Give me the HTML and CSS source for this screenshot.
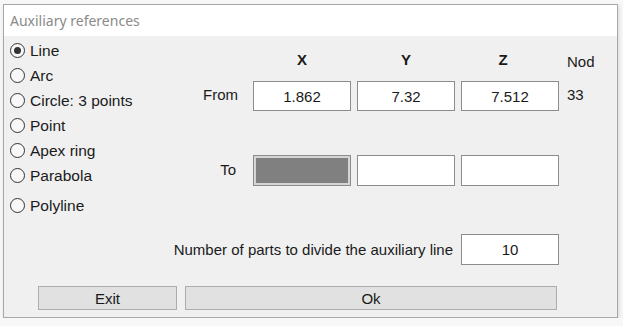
FILE: index.html
```html
<!DOCTYPE html>
<html lang="en">
<head>
    <meta charset="UTF-8">
    <title>Auxiliary references</title>
    <link rel="stylesheet" href="styles.css">
</head>
<body>

    <div class="dialog">
        <div class="dialog-title">Auxiliary references</div>

        <div class="dialog-body">
            <div class="ref-types">
                <label class="radio checked"><span class="radio-dot"></span>Line</label>
                <label class="radio"><span class="radio-dot"></span>Arc</label>
                <label class="radio"><span class="radio-dot"></span>Circle: 3 points</label>
                <label class="radio"><span class="radio-dot"></span>Point</label>
                <label class="radio"><span class="radio-dot"></span>Apex ring</label>
                <label class="radio"><span class="radio-dot"></span>Parabola</label>
                <label class="radio polyline"><span class="radio-dot"></span>Polyline</label>
            </div>

            <div class="coords">
                <div></div>
                <div class="col-head">X</div>
                <div class="col-head">Y</div>
                <div class="col-head col-z">Z</div>
                <div class="nod-head">Nod</div>

                <div class="row-label">From</div>
                <div class="field">1.862</div>
                <div class="field">7.32</div>
                <div class="field">7.512</div>
                <div class="nod-value">33</div>

                <div class="spacer"></div>

                <div class="row-label to-label">To</div>
                <div class="field field-active"></div>
                <div class="field"></div>
                <div class="field"></div>
                <div></div>

                <div class="spacer"></div>

                <div class="parts-label">Number of parts to divide the auxiliary line</div>
                <div class="field">10</div>
                <div></div>
            </div>
        </div>

        <div class="dialog-buttons">
            <button class="btn btn-exit">Exit</button>
            <button class="btn btn-ok">Ok</button>
        </div>
    </div>

</body>
</html>
```

FILE: styles.css
```css
body {
    margin: 0;
    padding: 0;
    background-color: #f7f7f7;
    font-family: "Liberation Sans", Arial, sans-serif;
    font-size: 15px;
    color: #1a1a1a;
}

.dialog {
    width: 613px;
    height: 312px;
    margin: 4px 0 0 3px;
    background-color: #f0f0f0;
    border: 1px solid #a8a8a8;
    box-shadow: 1px 2px 4px rgba(0, 0, 0, 0.12);
}

.dialog-title {
    height: 31px;
    line-height: 31px;
    padding-left: 6px;
    background-color: #fff;
    color: #8a8a8a;
    font-family: "Noto Sans", sans-serif;
    font-size: 14px;
}

.dialog-body {
    display: flex;
}

.ref-types {
    width: 166px;
    padding-top: 2px;
    display: flex;
    flex-direction: column;
}

.radio {
    height: 25px;
    display: flex;
    align-items: center;
    padding-left: 6px;
    font-size: 15.5px;
}

.radio.polyline {
    margin-top: 5px;
}

.radio-dot {
    width: 15px;
    height: 15px;
    border: 1px solid #333;
    border-radius: 50%;
    background-color: #f8f8f8;
    margin-right: 5px;
    position: relative;
    box-sizing: border-box;
}

.radio.checked .radio-dot::after {
    content: "";
    position: absolute;
    left: 3px;
    top: 3px;
    width: 7px;
    height: 7px;
    border-radius: 50%;
    background-color: #333;
}

.coords {
    display: grid;
    grid-template-columns: 77px 98px 98px 98px 50px;
    grid-template-rows: 45px 30px 44px 31px 48px 31px;
    column-gap: 6px;
}

.spacer {
    grid-column: 1 / -1;
}

.col-head {
    font-weight: bold;
    text-align: center;
    padding-top: 15px;
}

.col-z {
    padding-right: 14px;
}

.nod-head {
    padding-top: 17px;
    padding-left: 2px;
}

.row-label {
    display: flex;
    align-items: center;
    justify-content: flex-end;
    padding-right: 9px;
    padding-bottom: 3px;
}

.to-label {
    padding-right: 11px;
}

.nod-value {
    display: flex;
    align-items: center;
    padding-left: 2px;
    padding-bottom: 3px;
}

.field {
    background-color: #fff;
    border: 1px solid #8c8c8c;
    display: flex;
    align-items: center;
    justify-content: center;
}

.field-active {
    background-color: #808080;
    box-shadow: inset 0 0 0 2px #d4d4d4;
}

.parts-label {
    grid-column: 1 / 4;
    display: flex;
    align-items: center;
    justify-content: flex-end;
    padding-right: 2px;
    white-space: nowrap;
}

.dialog-buttons {
    display: flex;
    gap: 8px;
    padding-left: 34px;
    margin-top: 21px;
}

.btn {
    height: 24px;
    background-color: #e1e1e1;
    border: 1px solid #adadad;
    font-family: "Liberation Sans", Arial, sans-serif;
    font-size: 15px;
    color: #1a1a1a;
    padding: 0;
}

.btn-exit {
    width: 139px;
}

.btn-ok {
    width: 372px;
}
```
